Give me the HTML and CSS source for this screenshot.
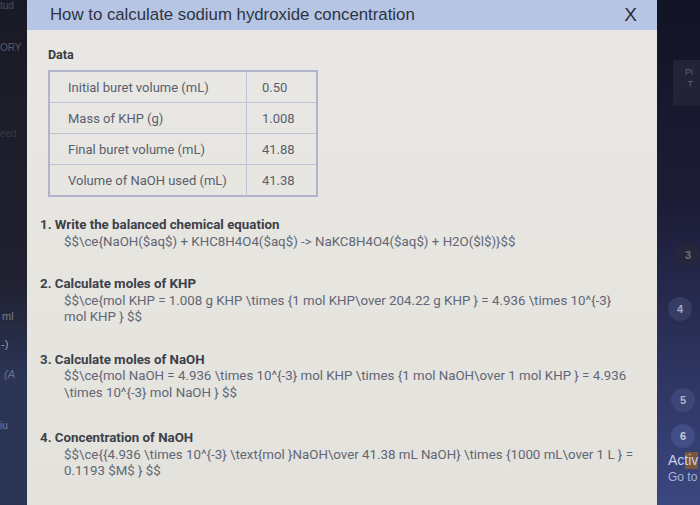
FILE: index.html
```html
<!DOCTYPE html>
<html>
<head>
<meta charset="utf-8">
<link rel="stylesheet" href="styles.css">
</head>
<body>
<div class="screen">
  <aside class="side side-left">
    <span class="ghost g1">tud</span>
    <span class="ghost g2">ORY</span>
    <span class="ghost g3">eed</span>
    <span class="ghost g4">ml</span>
    <span class="ghost g5">-)</span>
    <span class="ghost g6">(A</span>
    <span class="ghost g7">iu</span>
  </aside>
  <main class="modal">
    <header class="modal-head">
      <h1 class="modal-title">How to calculate sodium hydroxide concentration</h1>
      <span class="modal-close">X</span>
    </header>
    <section class="modal-body">
      <h2 class="data-title">Data</h2>
      <table class="data-table">
        <tr><td class="lbl">Initial buret volume (mL)</td><td class="val">0.50</td></tr>
        <tr><td class="lbl">Mass of KHP (g)</td><td class="val">1.008</td></tr>
        <tr><td class="lbl">Final buret volume (mL)</td><td class="val">41.88</td></tr>
        <tr><td class="lbl">Volume of NaOH used (mL)</td><td class="val">41.38</td></tr>
      </table>
      <ol class="steps">
        <li class="step">
          <div class="step-title">1. Write the balanced chemical equation</div>
          <div class="step-eq">$$\ce{NaOH($aq$) + KHC8H4O4($aq$) -&gt; NaKC8H4O4($aq$) + H2O($l$)}$$</div>
        </li>
        <li class="step">
          <div class="step-title">2. Calculate moles of KHP</div>
          <div class="step-eq">$$\ce{mol KHP = 1.008 g KHP \times {1 mol KHP\over 204.22 g KHP } = 4.936 \times 10^{-3}<br>mol KHP } $$</div>
        </li>
        <li class="step">
          <div class="step-title">3. Calculate moles of NaOH</div>
          <div class="step-eq">$$\ce{mol NaOH = 4.936 \times 10^{-3} mol KHP \times {1 mol NaOH\over 1 mol KHP } = 4.936<br>\times 10^{-3} mol NaOH } $$</div>
        </li>
        <li class="step">
          <div class="step-title">4. Concentration of NaOH</div>
          <div class="step-eq">$$\ce{{4.936 \times 10^{-3} \text{mol }NaOH\over 41.38 mL NaOH} \times {1000 mL\over 1 L } =<br>0.1193 $M$ } $$</div>
        </li>
      </ol>
    </section>
  </main>
  <aside class="side side-right">
    <div class="ghost-card">Pi<br>&nbsp;T</div>
    <span class="bubble b3">3</span>
    <span class="bubble b4">4</span>
    <span class="bubble b5">5</span>
    <span class="bubble b6">6</span>
    <div class="activate"><span class="act1">Activ</span><span class="act2">Go to</span></div>
  </aside>
</div>
</body>
</html>
```
FILE: styles.css
```css
html, body {
  margin: 0;
  padding: 0;
  width: 700px;
  height: 505px;
  overflow: hidden;
  background: #1b1b29;
}
.screen {
  display: grid;
  grid-template-columns: 27px 630px 43px;
  height: 505px;
}
.side {
  position: relative;
  overflow: hidden;
  font-family: "Liberation Sans", Arial, sans-serif;
}
.side-left {
  background: linear-gradient(180deg, #1a1a26 0%, #202030 55%, #2c3556 75%, #2b3352 100%);
}
.side-right {
  background: linear-gradient(180deg, #131326 0%, #1c1c36 40%, #2c325c 70%, #3b4780 100%);
}
.ghost {
  position: absolute;
  color: #6a6a7e;
  font-size: 10px;
}
.g1 { top: 0; left: 0; color: #4a4a5a; }
.g2 { top: 42px; left: 0; color: #5a5a6a; }
.g3 { top: 128px; left: 0; color: #3a3a46; }
.g4 { top: 310px; left: 2px; color: #7a7a88; font-size: 11px; }
.g5 { top: 338px; left: 1px; color: #9a9aa8; font-size: 11px; }
.g6 { top: 368px; left: 4px; color: #6a7290; font-size: 11px; font-style: italic; }
.g7 { top: 420px; left: 0; color: #7a7a9a; font-size: 10px; }
.ghost-card {
  position: absolute;
  top: 60px;
  left: 16px;
  width: 30px;
  height: 46px;
  background: #232338;
  color: #62627a;
  font-size: 9px;
  padding: 6px 0 0 12px;
  box-sizing: border-box;
  line-height: 12px;
}
.bubble {
  position: absolute;
  width: 24px;
  height: 24px;
  border-radius: 50%;
  background: #2c2c48;
  color: #a0a0b0;
  font-size: 11px;
  font-weight: bold;
  display: flex;
  align-items: center;
  justify-content: center;
}
.b3 { top: 243px; left: 19px; background: #27273c; color: #707080; }
.b4 { top: 297px; left: 11px; background: #363c64; color: #a8a8b8; }
.b5 { top: 388px; left: 14px; background: #3e4678; color: #b0b4c8; }
.b6 { top: 424px; left: 14px; background: #434d86; color: #c8cada; }
.activate {
  position: absolute;
  top: 452px;
  left: 11px;
  display: flex;
  flex-direction: column;
  line-height: 17px;
}
.act1 {
  color: #c8d0f0;
  font-size: 14px;
  background: linear-gradient(90deg, transparent 0 17px, #7a5838 17px);
}
.act2 { color: #a8b0d8; font-size: 12px; }

.modal {
  background: linear-gradient(180deg, #e9e8e4 0%, #e6e5e0 50%, #e3e2dc 100%);
  display: flex;
  flex-direction: column;
  font-family: Roboto, "Liberation Sans", sans-serif;
}
.modal-head {
  height: 30px;
  background: #b7c5e4;
  display: flex;
  align-items: center;
  justify-content: space-between;
  padding: 0 20px 0 23px;
  flex-shrink: 0;
}
.modal-title {
  margin: 0;
  font-family: "Liberation Sans", Arial, sans-serif;
  font-size: 16.8px;
  font-weight: normal;
  color: #2c3442;
}
.modal-close {
  font-family: "Liberation Sans", Arial, sans-serif;
  font-size: 19px;
  color: #2c2f38;
}
.modal-body {
  padding: 17px 0 0 13px;
}
.data-title {
  margin: 0 0 8px 8px;
  font-size: 12.5px;
  font-weight: bold;
  color: #3a3c44;
}
.data-table {
  margin-left: 8px;
  border-collapse: collapse;
  border: 2px solid #b2b4cf;
  font-size: 13px;
  color: #5a5e6e;
}
.data-table td {
  border: 1px solid #c1c2d6;
  height: 30px;
  padding: 0;
}
.data-table .lbl {
  width: 178px;
  padding-left: 18px;
}
.data-table .val {
  width: 54px;
  padding-left: 15px;
}
.steps {
  list-style: none;
  margin: 20px 0 0;
  padding: 0;
  color: #5c6070;
}
.step {
  margin-bottom: 26px;
  line-height: 16.5px;
}
.step:nth-child(3) {
  margin-bottom: 29px;
}
.step-title {
  font-weight: bold;
  font-size: 13.3px;
  color: #3d4048;
}
.step-eq {
  font-size: 13.3px;
  padding-left: 24px;
  color: #626676;
}
```
